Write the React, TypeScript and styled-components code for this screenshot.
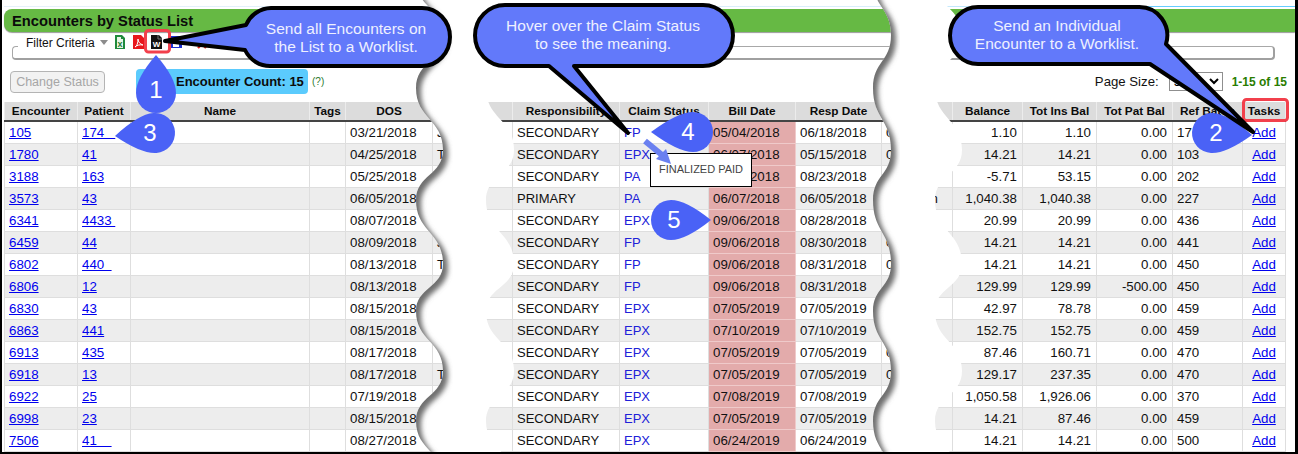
import React from 'react';
import styled, { createGlobalStyle } from 'styled-components';

const GlobalStyle = createGlobalStyle`
  html, body {
    margin: 0;
    padding: 0;
    background: #fff;
  }
  body {
    font-family: "Liberation Sans", Arial, sans-serif;
  }
`;

const Frame = styled.div`
  position: relative;
  box-sizing: border-box;
  width: 1298px;
  height: 454px;
  padding: 6px 0 0 2px;
  overflow: hidden;
  background: #fff;
  border-left: 2px solid #000;
  border-right: 3px solid #000;
  border-bottom: 2px solid #000;
`;

const TopLine = styled.div`
  height: 1px;
  background: linear-gradient(90deg, #e6f1fa 0%, #d8eefb 70%, #66ccff 90%);
`;

const TitleBar = styled.div`
  display: flex;
  align-items: center;
  box-sizing: border-box;
  height: 23px;
  margin-top: 2px;
  padding-left: 8px;
  background: #66b944;
  border-radius: 8px 0 0 8px;
  box-shadow: 0 1px 1px #9a9a9a;
  font-size: 14.7px;
  font-weight: bold;
  color: #0b0b0b;
`;

const FilterBox = styled.fieldset`
  box-sizing: border-box;
  height: 26px;
  margin: 2px 20px 0 8px;
  padding: 0;
  background: #fff;
  border: 1px solid #a8a8a8;
  border-bottom: 2px solid #a0a0a0;
  border-right: 2px solid #a0a0a0;
  border-radius: 4px;
`;

const FilterLegend = styled.legend`
  display: flex;
  align-items: flex-start;
  height: 24px;
  margin-left: 5px;
  padding: 0 0 0 8px;
  font-size: 12px;
  color: #111;
`;

const FilterName = styled.span`
  margin-top: 2px;
  line-height: 14px;
`;

const Caret = styled.span`
  width: 0;
  height: 0;
  margin: 6px 6px 0 5px;
  border-left: 4px solid transparent;
  border-right: 4px solid transparent;
  border-top: 5px solid #8c8c8c;
`;

const ToolIcon = styled.svg<{ $gap: number }>`
  display: block;
  width: 12px;
  height: 14px;
  margin: 1px ${p => p.$gap}px 0 0;
`;

const ActionRow = styled.div`
  display: flex;
  align-items: center;
  height: 25px;
  margin-top: 9px;
  padding-left: 6px;
`;

const ChangeButton = styled.button`
  box-sizing: border-box;
  width: 95px;
  height: 22px;
  padding: 0;
  border: 1px solid #b4b4b4;
  border-radius: 4px;
  background: #f2f2f2;
  font-family: inherit;
  font-size: 12.5px;
  color: #a6a6a6;
`;

const CountPill = styled.div`
  box-sizing: border-box;
  width: 172px;
  height: 25px;
  margin-left: 31px;
  padding-left: 40px;
  border-radius: 4px;
  background: #5bcbfd;
  font-size: 13px;
  font-weight: bold;
  line-height: 25px;
  color: #0c0c0c;
  white-space: nowrap;
`;

const HelpMark = styled.span`
  margin-left: 4px;
  font-size: 10px;
  color: #2d7a2d;
`;

const PageSizeLabel = styled.span`
  margin-left: auto;
  font-size: 13.2px;
  color: #111;
`;

const PageSelect = styled.select`
  box-sizing: border-box;
  width: 54px;
  height: 19px;
  margin: 0 9px 0 10px;
  padding: 0;
  border: 1px solid #8f8f8f;
  background: #fff;
  font-family: inherit;
  font-size: 13px;
`;

const PageRange = styled.span`
  margin-right: 8px;
  font-size: 12px;
  font-weight: bold;
  color: #2a7d00;
`;

const Table = styled.table`
  width: 1281px;
  margin-top: 8px;
  table-layout: fixed;
  border-collapse: collapse;
  font-size: 13.3px;
  color: #111;
`;

const Col = styled.col<{ $w: number }>`
  width: ${p => p.$w}px;
`;

const HeadCell = styled.th`
  height: 18px;
  padding: 0;
  background: #dcdcdc;
  border-left: 1px solid #ececec;
  border-right: 1px solid #ececec;
  border-bottom: 2px solid #444;
  font-size: 11.8px;
  font-weight: bold;
  color: #0b0b0b;
  white-space: nowrap;
  overflow: hidden;
`;

const Row = styled.tr<{ $shaded: boolean }>`
  background: ${p => (p.$shaded ? '#ededed' : '#fff')};
`;

const Cell = styled.td<{ $num?: boolean; $late?: boolean; $inset?: number; $center?: boolean }>`
  height: 21px;
  padding: 0 ${p => p.$inset ?? (p.$num ? 5 : 4)}px 0 4px;
  border: 1px solid #dedede;
  text-align: ${p => (p.$center ? 'center' : p.$num ? 'right' : 'left')};
  white-space: nowrap;
  overflow: hidden;
  background: ${p => (p.$late ? '#e3abab' : 'transparent')};
  border-color: ${p => (p.$late ? '#efcaca' : '#dedede')};
`;

const RecordLink = styled.a`
  color: #0000ee;
  text-decoration: underline;
`;

const StatusCode = styled.span`
  font-size: 13px;
  color: #2020d8;
`;

const CoverageText = styled.span`
  font-size: 13px;
`;

const FinalizedTip = styled.div`
  position: absolute;
  left: 648px;
  top: 153px;
  box-sizing: border-box;
  width: 102px;
  height: 34px;
  border: 1px solid #000;
  background: #fff;
  font-size: 11px;
  line-height: 30px;
  text-align: center;
  color: #444;
`;

const Overlay = styled.svg`
  position: absolute;
  left: -2px;
  top: 0;
  width: 1298px;
  height: 454px;
  pointer-events: none;
`;

const BubbleText = styled.div<{ $x: number; $y: number }>`
  position: absolute;
  left: ${p => p.$x - 130 - 2}px;
  top: ${p => p.$y}px;
  width: 260px;
  font-size: 15.5px;
  line-height: 18px;
  text-align: center;
  color: #eef0ff;
`;

const PinNumber = styled.div<{ $x: number; $y: number }>`
  position: absolute;
  left: ${p => p.$x - 20 - 2}px;
  top: ${p => p.$y - 14}px;
  width: 40px;
  font-size: 24px;
  line-height: 28px;
  text-align: center;
  color: #fff;
`;

const widths = [73, 53, 179, 36, 87, 80, 107, 89, 87, 86, 71, 70, 74, 76, 70, 43];
const headers = ['Encounter', 'Patient', 'Name', 'Tags', 'DOS', '', 'Responsibility', 'Claim Status', 'Bill Date', 'Resp Date', '', 'Balance', 'Tot Ins Bal', 'Tot Pat Bal', 'Ref Batch', 'Tasks'];

type Encounter = [string, string, string, string, string, string, string, string, string, string, string, string, string];

const nb = '\u00a0';

// id, patient, dos, cut-off col, responsibility, claim, bill, resp, cut-off col, balance, ins, pat, batch
const rows: Encounter[] = [
  ['105', `174${nb}${nb}${nb}`, '03/21/2018', 'J', 'SECONDARY', 'FP', '05/04/2018', '06/18/2018', '0', '1.10', '1.10', '0.00', '17'],
  ['1780', '41', '04/25/2018', 'T', 'SECONDARY', 'EPX', '06/07/2018', '05/15/2018', '0', '14.21', '14.21', '0.00', '103'],
  ['3188', '163', '05/25/2018', '', 'SECONDARY', 'PA', '08/24/2018', '08/23/2018', '', '-5.71', '53.15', '0.00', '202'],
  ['3573', '43', '06/05/2018', '', 'PRIMARY', 'PA', '06/07/2018', '06/05/2018', 'n', '1,040.38', '1,040.38', '0.00', '227'],
  ['6341', `4433${nb}`, '08/07/2018', '', 'SECONDARY', 'EPX', '09/06/2018', '08/28/2018', '', '20.99', '20.99', '0.00', '436'],
  ['6459', '44', '08/09/2018', 'J', 'SECONDARY', 'FP', '09/06/2018', '08/30/2018', '0', '14.21', '14.21', '0.00', '441'],
  ['6802', `440${nb}${nb}`, '08/13/2018', 'T', 'SECONDARY', 'FP', '09/06/2018', '08/31/2018', '0', '14.21', '14.21', '0.00', '450'],
  ['6806', '12', '08/13/2018', '', 'SECONDARY', 'FP', '09/06/2018', '08/31/2018', '', '129.99', '129.99', '-500.00', '450'],
  ['6830', '43', '08/15/2018', '', 'SECONDARY', 'EPX', '07/05/2019', '07/05/2019', '', '42.97', '78.78', '0.00', '459'],
  ['6863', '441', '08/15/2018', '', 'SECONDARY', 'EPX', '07/10/2019', '07/10/2019', '', '152.75', '152.75', '0.00', '459'],
  ['6913', '435', '08/17/2018', '', 'SECONDARY', 'EPX', '07/05/2019', '07/05/2019', '0', '87.46', '160.71', '0.00', '470'],
  ['6918', '13', '08/17/2018', 'T', 'SECONDARY', 'EPX', '07/05/2019', '07/05/2019', '0', '129.17', '237.35', '0.00', '470'],
  ['6922', '25', '07/19/2018', '', 'SECONDARY', 'EPX', '07/08/2019', '07/08/2019', '', '1,050.58', '1,926.06', '0.00', '370'],
  ['6998', '23', '08/15/2018', '', 'SECONDARY', 'EPX', '07/05/2019', '07/05/2019', '', '14.21', '87.46', '0.00', '459'],
  ['7506', `41${nb}${nb}${nb}${nb}`, '08/27/2018', '', 'SECONDARY', 'EPX', '06/24/2019', '06/24/2019', '', '14.21', '14.21', '0.00', '500'],
];

// the tear edges swing between the same heights on each side of a gap
const crestYs = [-20, 35, 88, 150, 200, 264, 311, 371, 421, 480];

const wave = (low: number, high: number, reverse = false) => {
  const pts = crestYs.map((y, i) => [i % 2 === 0 ? low : high, y]);
  const list = reverse ? [...pts].reverse() : pts;
  return list
    .slice(1)
    .map((b, i) => {
      const a = list[i];
      const mid = (a[1] + b[1]) / 2;
      return `C${a[0]} ${mid} ${b[0]} ${mid} ${b[0]} ${b[1]}`;
    })
    .join(' ');
};

const gaps = [
  { id: 'a', left: [416, 443], right: [486, 514] },
  { id: 'b', left: [873, 891], right: [935, 962] },
];

const pin = (cx: number, cy: number, r: number, tx: number, ty: number) => {
  const len = Math.hypot(tx - cx, ty - cy);
  const dx = (tx - cx) / len;
  const dy = (ty - cy) / len;
  const ax = cx - dy * r;
  const ay = cy + dx * r;
  const bx = cx + dy * r;
  const by = cy - dx * r;
  const q = (sx: number, sy: number) => `${sx + dx * r * 0.75} ${sy + dy * r * 0.75}`;
  return `M${tx} ${ty} Q${q(bx, by)} ${bx} ${by} A${r} ${r} 0 1 0 ${ax} ${ay} Q${q(ax, ay)} ${tx} ${ty}Z`;
};

const pins = [
  { n: '1', cx: 156, cy: 93, tx: 156, ty: 55, lx: 156, ly: 90 },
  { n: '3', cx: 155, cy: 133, tx: 115, ty: 136, lx: 150, ly: 133 },
  { n: '4', cx: 693, cy: 132, tx: 651, ty: 132, lx: 688, ly: 132 },
  { n: '5', cx: 671, cy: 220, tx: 711, ty: 220, lx: 674, ly: 220 },
  { n: '2', cx: 1212, cy: 133, tx: 1252, ty: 135, lx: 1216, ly: 133 },
];

const ExcelIcon = () => (
  <ToolIcon viewBox="0 0 12 14" $gap={7}>
    <path d="M1 0h7l3 3v11H1z" fill="#1f8a3c" />
    <path d="M3 2h4v2h2v9H3z" fill="#e8f5e6" />
    <text x="6" y="12" fontSize="9" fontWeight="bold" textAnchor="middle" fill="#1f7a34" fontFamily="Liberation Sans">x</text>
  </ToolIcon>
);

const PdfIcon = () => (
  <ToolIcon viewBox="0 0 12 14" $gap={6}>
    <path d="M0 0h8l3 3v11H0z" fill="#e8161c" />
    <path d="M2 12c2-1 3-4 3-8 0 3 2 5 5 6-3-.5-6 0-8 2z" fill="none" stroke="#fff" strokeWidth="1" />
  </ToolIcon>
);

const WordIcon = () => (
  <ToolIcon viewBox="0 0 12 14" $gap={7}>
    <path d="M0 0h8l3 3v11H0z" fill="#111" />
    <path d="M7 0v4h4" fill="none" stroke="#777" strokeWidth="1" />
    <text x="5.5" y="12" fontSize="8" fontWeight="bold" textAnchor="middle" fill="#fff" fontFamily="Liberation Sans">W</text>
  </ToolIcon>
);

const SaveIcon = () => (
  <ToolIcon viewBox="0 0 12 14" $gap={14}>
    <path d="M0 1h12v12H0z" fill="#1c2fd0" />
    <path d="M3 8h6v4H3z" fill="#fff" />
  </ToolIcon>
);

const ClearIcon = () => (
  <ToolIcon viewBox="0 0 12 14" $gap={0}>
    <path d="M2 5l8 8M10 5l-8 8" stroke="#e2231a" strokeWidth="2.4" />
  </ToolIcon>
);

const App = () => (
  <>
    <GlobalStyle />
    <Frame>
      <TopLine />
      <TitleBar>Encounters by Status List</TitleBar>
      <FilterBox>
        <FilterLegend>
          <FilterName>Filter Criteria</FilterName>
          <Caret />
          <ExcelIcon />
          <PdfIcon />
          <WordIcon />
          <SaveIcon />
          <ClearIcon />
        </FilterLegend>
      </FilterBox>
      <ActionRow>
        <ChangeButton>Change Status</ChangeButton>
        <CountPill>
          Encounter Count: 15
        </CountPill>
        <HelpMark>(?)</HelpMark>
        <PageSizeLabel>Page Size:</PageSizeLabel>
        <PageSelect defaultValue="50">
          <option value="50">50</option>
        </PageSelect>
        <PageRange>1-15 of 15</PageRange>
      </ActionRow>
      <Table>
        <colgroup>
          {widths.map((w, i) => (
            <Col key={i} $w={w} />
          ))}
        </colgroup>
        <thead>
          <tr>
            {headers.map((h, i) => (
              <HeadCell key={i}>{h}</HeadCell>
            ))}
          </tr>
        </thead>
        <tbody>
          {rows.map((r, i) => (
            <Row key={r[0]} $shaded={i % 2 === 1}>
              <Cell><RecordLink href="#">{r[0]}</RecordLink></Cell>
              <Cell><RecordLink href="#">{r[1]}</RecordLink></Cell>
              <Cell />
              <Cell />
              <Cell>{r[2]}</Cell>
              <Cell>{r[3]}</Cell>
              <Cell><CoverageText>{r[4]}</CoverageText></Cell>
              <Cell><StatusCode>{r[5]}</StatusCode></Cell>
              <Cell $late>{r[6]}</Cell>
              <Cell>{r[7]}</Cell>
              {r[8] === 'n' ? <Cell $num $inset={14}>{r[8]}</Cell> : <Cell>{r[8]}</Cell>}
              <Cell $num>{r[9]}</Cell>
              <Cell $num>{r[10]}</Cell>
              <Cell $num>{r[11]}</Cell>
              <Cell>{r[12]}</Cell>
              <Cell $center><RecordLink href="#">Add</RecordLink></Cell>
            </Row>
          ))}
        </tbody>
      </Table>
      <FinalizedTip>FINALIZED PAID</FinalizedTip>
      <Overlay viewBox="0 0 1298 454">
        <defs>
          <filter id="tearBlur" x="-5%" y="-5%" width="110%" height="110%">
            <feGaussianBlur stdDeviation="2.6" />
          </filter>
          {gaps.map(g => (
            <clipPath key={g.id} id={`gap-${g.id}`}>
              <path d={`M${g.left[0]} -20 ${wave(g.left[0], g.left[1])} L${g.right[1]} 480 ${wave(g.right[0], g.right[1], true)} Z`} />
            </clipPath>
          ))}
        </defs>
        {gaps.map(g => (
          <g key={g.id} clipPath={`url(#gap-${g.id})`}>
            <rect x={g.left[0] - 10} y={-20} width={g.right[1] - g.left[0] + 20} height={500} fill="#fff" />
            <path
              d={`M${g.left[0]} -20 ${wave(g.left[0], g.left[1])} L${g.left[0] - 60} 480 L${g.left[0] - 60} -20 Z`}
              transform="translate(5 4)"
              fill="#707070"
              filter="url(#tearBlur)"
            />
          </g>
        ))}

        <rect x="145.5" y="30.5" width="24" height="21.5" rx="3" fill="none" stroke="#f2404c" strokeWidth="3" />
        <rect x="1243.5" y="99.5" width="44" height="21" rx="3" fill="none" stroke="#f2404c" strokeWidth="3" />

        {pins.map(p => (
          <path key={p.n} d={pin(p.cx, p.cy, 20, p.tx, p.ty)} fill="#4a62f6" />
        ))}

        <g fill="#6279fa" stroke="#000" strokeWidth="4" strokeLinejoin="round">
          <path d="M271 8H422A28 29 0 0 1 422 66H271A28 29 0 0 1 245 50L165 41L246 25A28 29 0 0 1 271 8Z" />
          <path d="M505 5H703A30 30.5 0 0 1 703 66H574L628 133L549 66H505A30 30.5 0 0 1 505 5Z" />
          <path d="M978 7H1139A28 28.5 0 0 1 1166 44L1253 132L1150 64H978A28 28.5 0 0 1 978 7Z" />
        </g>

        <path d="M645 141L662 155" stroke="#6a80f0" strokeWidth="6" />
        <path d="M671 164L656 159L666 149Z" fill="#6a80f0" />
      </Overlay>
      <BubbleText $x={346} $y={20}>Send all Encounters on<br />the List to a Worklist.</BubbleText>
      <BubbleText $x={603} $y={17}>Hover over the Claim Status<br />to see the meaning.</BubbleText>
      <BubbleText $x={1057} $y={17}>Send an Individual<br />Encounter to a Worklist.</BubbleText>
      {pins.map(p => (
        <PinNumber key={p.n} $x={p.lx} $y={p.ly}>{p.n}</PinNumber>
      ))}
    </Frame>
  </>
);

export default App;
